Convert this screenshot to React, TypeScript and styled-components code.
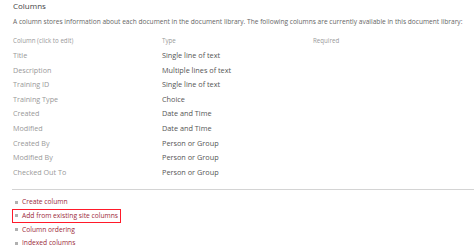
import { Fragment } from "react";
import styled, { createGlobalStyle } from "styled-components";

const GlobalStyle = createGlobalStyle`
  html, body {
    margin: 0;
    padding: 0;
    background: #fff;
  }
  body {
    font-family: "Open Sans", "Noto Sans", sans-serif;
  }
`;

const Page = styled.div`
  padding: 0 0 0 13px;
  width: 474px;
  box-sizing: border-box;
`;

const Heading = styled.div`
  font-size: 8px;
  color: #444;
  line-height: 12px;
`;

const Intro = styled.div`
  font-size: 6.6px;
  color: #666;
  line-height: 12px;
  margin-top: 4px;
  white-space: nowrap;
`;

const Table = styled.div`
  display: grid;
  grid-template-columns: 149px 151px 1fr;
  margin-top: 6px;
`;

const HeaderCell = styled.div`
  font-size: 6.2px;
  color: #999;
  line-height: 14px;
  height: 14px;
`;

const NameCell = styled.div`
  font-size: 7.2px;
  color: #999;
  line-height: 14.6px;
`;

const TypeCell = styled.div`
  font-size: 7.3px;
  color: #555;
  line-height: 14.6px;
`;

const Divider = styled.hr`
  border: none;
  border-top: 1.5px solid #d4d4d4;
  margin: 10px 0 5px -1px;
`;

const LinkList = styled.ul`
  list-style: none;
  margin: 0;
  padding: 0;
`;

const LinkItem = styled.li<{ $highlight?: boolean }>`
  display: flex;
  align-items: center;
  gap: 4px;
  font-size: 6.7px;
  line-height: 9.7px;
  color: #9c2a3a;
  width: fit-content;
  padding: 1px 2px 1px 2px;
  margin-left: -1px;
  border: 1.5px solid ${(p) => (p.$highlight ? "#ff1a2a" : "transparent")};
`;

const Bullet = styled.span`
  width: 3px;
  height: 3px;
  background: #b0b0b0;
  flex: none;
`;

const columns: [string, string][] = [
  ["Title", "Single line of text"],
  ["Description", "Multiple lines of text"],
  ["Training ID", "Single line of text"],
  ["Training Type", "Choice"],
  ["Created", "Date and Time"],
  ["Modified", "Date and Time"],
  ["Created By", "Person or Group"],
  ["Modified By", "Person or Group"],
  ["Checked Out To", "Person or Group"],
];

const links = [
  "Create column",
  "Add from existing site columns",
  "Column ordering",
  "Indexed columns",
];

export default function App() {
  return (
    <>
      <GlobalStyle />
      <Page>
        <Heading>Columns</Heading>
        <Intro>
          A column stores information about each document in the document
          library. The following columns are currently available in this
          document library:
        </Intro>
        <Table>
          <HeaderCell>Column (click to edit)</HeaderCell>
          <HeaderCell>Type</HeaderCell>
          <HeaderCell>Required</HeaderCell>
          {columns.map(([name, type]) => (
            <Fragment key={name}>
              <NameCell>{name}</NameCell>
              <TypeCell>{type}</TypeCell>
              <TypeCell />
            </Fragment>
          ))}
        </Table>
        <Divider />
        <LinkList>
          {links.map((l, i) => (
            <LinkItem key={l} $highlight={i === 1}>
              <Bullet />
              {l}
            </LinkItem>
          ))}
        </LinkList>
      </Page>
    </>
  );
}
